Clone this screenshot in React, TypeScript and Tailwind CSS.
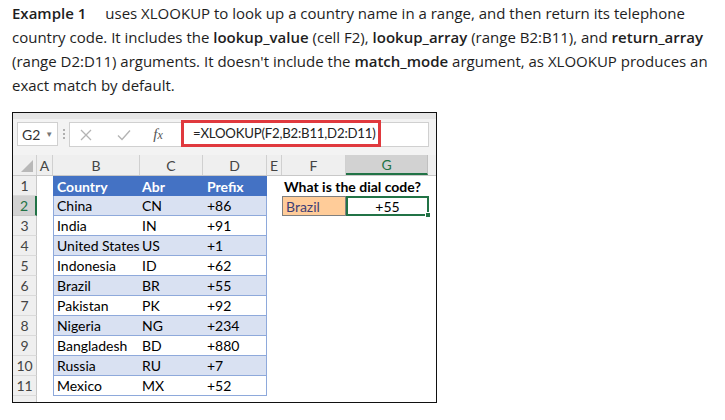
import React from "react";

const rows: [string, string, string][] = [
  ["China", "CN", "+86"],
  ["India", "IN", "+91"],
  ["United States", "US", "+1"],
  ["Indonesia", "ID", "+62"],
  ["Brazil", "BR", "+55"],
  ["Pakistan", "PK", "+92"],
  ["Nigeria", "NG", "+234"],
  ["Bangladesh", "BD", "+880"],
  ["Russia", "RU", "+7"],
  ["Mexico", "MX", "+52"],
];

function RowHeader({ n, selected }: { n: number | string; selected?: boolean }) {
  return (
    <div
      className={
        selected
          ? "w-[24px] h-full flex items-center justify-center bg-[#d2d2d2] text-[#217346] border-r-2 border-r-[#217346] border-b border-b-[#c8c8c8]"
          : "w-[24px] h-full flex items-center justify-center bg-[#efefef] text-[#444] border-r border-r-[#c8c8c8] border-b border-b-[#dadada]"
      }
    >
      {n}
    </div>
  );
}

export default function App() {
  return (
    <div className="w-[725px] h-[420px] bg-white overflow-hidden">
      <p
        className="pl-[12px] pt-[1px] text-[15px] leading-[24px] text-[#1e1e1e] whitespace-nowrap"
        style={{ fontFamily: '"Open Sans", sans-serif' }}
      >
        <b className="font-semibold">Example 1</b>
        <span className="ml-[19px]">uses XLOOKUP to look up a country name in a range, and then return its telephone</span>
        <br />
        country code. It includes the <b className="font-semibold">lookup_value</b> (cell F2),{" "}
        <b className="font-semibold">lookup_array</b> (range B2:B11), and <b className="font-semibold">return_array</b>
        <br />
        (range D2:D11) arguments. It doesn't include the <b className="font-semibold">match_mode</b> argument, as XLOOKUP
        produces an
        <br />
        exact match by default.
      </p>

      <div
        className="ml-[12px] mt-[15px] w-[425px] h-[291px] border border-[#111] flex flex-col overflow-hidden"
        style={{ fontFamily: 'Lato, "Noto Sans", sans-serif' }}
      >
        {/* top strip */}
        <div className="h-[6px] bg-[#e6e6e6] shrink-0" />
        {/* formula bar */}
        <div className="h-[36px] bg-[#f3f3f3] flex items-start shrink-0">
          <div className="ml-[4px] mt-[3px] w-[41px] h-[24px] bg-white border border-[#d0d0d0] flex items-center pl-[4px] text-[14px] text-[#333]">
            G2
            <span className="ml-[5px] text-[8px] text-[#777]">▼</span>
          </div>
          <div className="w-[11px] h-[30px] flex flex-col items-center justify-center gap-[2px]">
            <span className="w-[2px] h-[2px] bg-[#b0b0b0]" />
            <span className="w-[2px] h-[2px] bg-[#b0b0b0]" />
            <span className="w-[2px] h-[2px] bg-[#b0b0b0]" />
          </div>
          <div className="mt-[3px] w-[360px] h-[25px] bg-white border border-[#d0d0d0] flex items-center">
            <div className="w-[32px] flex justify-center">
              <svg width="12" height="12" viewBox="0 0 12 12">
                <path d="M1 1 L11 11 M11 1 L1 11" stroke="#b4b4b4" strokeWidth="1.3" fill="none" />
              </svg>
            </div>
            <div className="w-[44px] flex justify-center">
              <svg width="14" height="12" viewBox="0 0 14 12">
                <path d="M1 6.5 L5 10.5 L13 1.5" stroke="#b4b4b4" strokeWidth="1.4" fill="none" />
              </svg>
            </div>
            <div className="w-[24px] flex justify-center">
              <span
                className="text-[15px] italic text-[#555]"
                style={{ fontFamily: '"Liberation Serif", serif' }}
              >
                f<span className="text-[12px]">x</span>
              </span>
            </div>
            <div className="ml-[11px] -mt-[2px] w-[200px] h-[27px] border-[3px] border-[#e0393e] flex items-center pl-[9px] text-[13.2px] tracking-[-0.2px] text-[#222] bg-white whitespace-nowrap">
              =XLOOKUP(F2,B2:B11,D2:D11)
            </div>
          </div>
        </div>

        {/* column headers */}
        <div className="h-[21px] flex shrink-0 text-[14px] text-[#444] bg-[#efefef] border-b border-[#c8c8c8]">
          <div className="w-[24px] h-full relative border-r border-[#d0d0d0]">
            <svg width="12" height="12" viewBox="0 0 12 12" className="absolute right-[3px] bottom-[3px]">
              <path d="M12 0 L12 12 L0 12 Z" fill="#b8b8b8" />
            </svg>
          </div>
          <div className="w-[16px] flex items-center justify-center border-r border-[#d0d0d0]">A</div>
          <div className="w-[87px] flex items-center justify-center border-r border-[#d0d0d0]">B</div>
          <div className="w-[63px] flex items-center justify-center border-r border-[#d0d0d0]">C</div>
          <div className="w-[64px] flex items-center justify-center border-r border-[#d0d0d0]">D</div>
          <div className="w-[15px] flex items-center justify-center border-r border-[#d0d0d0]">E</div>
          <div className="w-[64px] flex items-center justify-center border-r border-[#d0d0d0]">F</div>
          <div className="w-[82px] flex items-center justify-center bg-[#d2d2d2] text-[#217346] border-b-2 border-[#217346] border-r border-r-[#c0c0c0]">
            G
          </div>
          <div className="flex-1" />
        </div>

        {/* row 1 */}
        <div className="h-[20px] flex shrink-0 text-[14px]">
          <RowHeader n={1} />
          <div className="w-[16px]" />
          <div className="w-[214px] flex bg-[#4472c4] text-white font-bold">
            <div className="w-[87px] pl-[4px] flex items-center">Country</div>
            <div className="w-[63px] pl-[2px] flex items-center">Abr</div>
            <div className="w-[64px] pl-[4px] flex items-center">Prefix</div>
          </div>
          <div className="w-[15px]" />
          <div className="pl-[2px] flex items-center font-bold text-black whitespace-nowrap">What is the dial code?</div>
        </div>

        {rows.map((r, i) => {
          const banded = i % 2 === 0;
          return (
            <div key={i} className="h-[20px] flex shrink-0 text-[14px]">
              <RowHeader n={i + 2} selected={i === 0} />
              <div className="w-[16px]" />
              <div
                className={
                  (banded ? "bg-[#d9e1f2] " : "bg-white ") +
                  "w-[214px] flex text-black border-x border-b border-[#8ea9db]"
                }
              >
                <div className="w-[86px] pl-[3px] flex items-center whitespace-nowrap">{r[0]}</div>
                <div className="w-[63px] pl-[2px] flex items-center">{r[1]}</div>
                <div className="w-[63px] pl-[4px] flex items-center">{r[2]}</div>
              </div>
              {i === 0 && (
                <>
                  <div className="w-[15px]" />
                  <div className="w-[64px] h-full bg-[#ffcc99] border border-[#7f7f7f] text-[#3f3f76] pl-[3px] flex items-center">
                    Brazil
                  </div>
                  <div className="w-[83px] h-full relative border-2 border-[#217346] flex items-center justify-center text-black">
                    +55
                    <span className="absolute -right-[4px] -bottom-[4px] w-[6px] h-[6px] bg-[#217346] border border-white" />
                  </div>
                </>
              )}
            </div>
          );
        })}
        <div className="flex-1 flex">
          <div className="w-[24px] h-full bg-[#efefef] border-r border-[#c8c8c8]" />
        </div>
      </div>
    </div>
  );
}
